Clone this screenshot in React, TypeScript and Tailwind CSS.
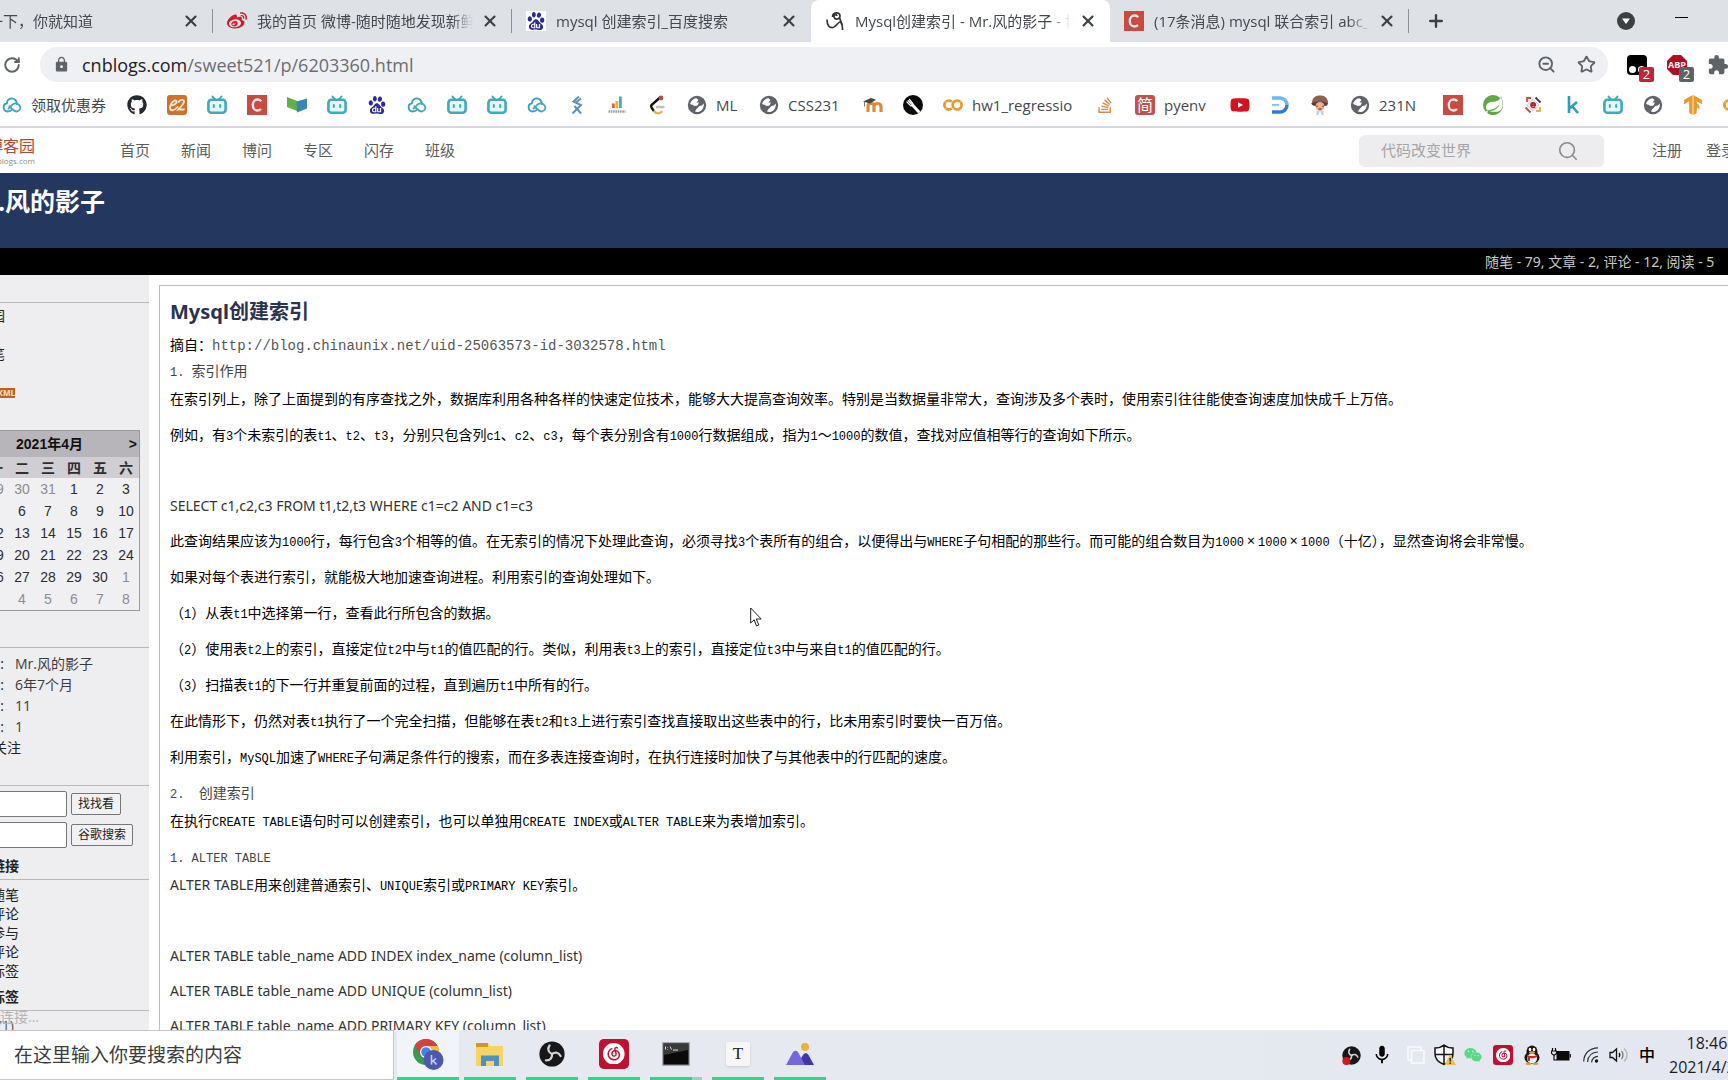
import React from "react";
import { FaGithub, FaWeibo, FaStackOverflow, FaYoutube, FaWeixin } from "react-icons/fa";
import { MdExtension, MdLock, MdMic } from "react-icons/md";
import {
  SiBaidu,
  SiGooglecolab,
  SiSpring,
  SiTensorflow,
  SiNeteasecloudmusic,
} from "react-icons/si";
import { X, Plus, Star, Search, ZoomOut, RotateCw } from "lucide-react";

/* ---------- icons ---------- */

const Bili = () => (
  <svg viewBox="0 0 20 20" className="size-5" fill="none" stroke="#3fa9bd" strokeWidth="2.6" strokeLinecap="round">
    <rect x="1.4" y="4.8" width="17.2" height="13" rx="3" fill="#e6f8fa" />
    <path d="M5.500 1.600 8 4.400M14.500 1.600 12 4.400" strokeWidth="2" />
    <path d="M6.800 10v2M13.200 10v2" strokeWidth="2" />
  </svg>
);

const Cloud = () => (
  <svg viewBox="0 0 20 20" className="size-5" fill="none" stroke="#3a9fc4" strokeWidth="1.9" strokeLinecap="round">
    <path d="M10 14.500C8.800 16 7.500 16.500 5.500 16.500A4.200 4.200 0 0 1 5 8.200M4.800 8.200C5.300 4 9 2.500 12 4c2 1 2.900 2.800 2.700 5" />
    <path d="M6.500 13.500 9.700 10.300c2.500-2.500 5.500-2.200 7.300-.5 2.600 2.600 1 6.500-2.200 6.700-2.200.1-3-1-4.800-2.600L7.500 11.300" stroke="#42adba" />
  </svg>
);

const Csdn = () => (
  <svg viewBox="0 0 20 20" className="size-5">
    <rect width="20" height="20" fill="#c94a42" />
    <path d="M14.200 6.200C13.200 5 11.900 4.500 10.500 4.500 7.500 4.500 5.800 7 5.800 10s1.700 5.500 4.500 5.500c1.500 0 2.700-.5 3.700-1.500" fill="none" stroke="#fbe9e7" strokeWidth="2.300" />
  </svg>
);

const Globe = () => (
  <svg viewBox="0 0 20 20" className="size-5">
    <circle cx="10" cy="10" r="9.200" fill="#606368" />
    <path d="M3 9C3.800 6 6 3.500 9.500 3.200L11.500 5 9.500 7.500h2.500l-1.500 3-3 .5-1.500-1Z" fill="#fff" />
    <path d="M10 13.500 12.500 11l2.500-.500 1.800-2c.5 3.500-1.300 7-4.800 8.200-1.500.5-3 .3-4-.2L9 14.500Z" fill="#fff" />
  </svg>
);

const Baidu = () => (
  <span className="flex size-5 items-center justify-center bg-white">
    <SiBaidu className="size-[18px] text-[#2b2a9c]" />
  </span>
);

const Ali = () => (
  <svg viewBox="0 0 20 20" className="size-5" fill="none" stroke="#fbe6d2" strokeWidth="1.900" strokeLinecap="round">
    <rect width="20" height="20" rx="3" fill="#d0702a" stroke="none" />
    <path d="M4 10.500c3.500-.5 6-2.300 5.500-4.300C9 4.500 5.500 6 3.800 9.500 2.300 13 3 15.500 5.500 15.300c2-.2 3.500-1.500 5-3.300" />
    <path d="M11.500 7c1-2.300 5-3 5.500-.8.400 2-1.500 3.600-5.500 8.300 2-.5 3.800.8 5.500-.3" />
  </svg>
);

const Map = () => (
  <svg viewBox="0 0 20 20" className="size-5">
    <path d="M0 2 10 6v10L0 12Z" fill="#62b146" />
    <path d="M9.500 6.500 20 3.500v10L10 17.500Z" fill="#3a86b8" />
  </svg>
);

const Knot = () => (
  <svg viewBox="0 0 20 20" className="size-5" fill="none" stroke="#5a8fc9" strokeWidth="2">
    <path d="M12 1.500 6.500 6.500l7.500 3.500-8.500 8.500M7.500 11l6.500 7.500M9.500 7 14 3.500" />
  </svg>
);

const CodeTop = () => (
  <svg viewBox="0 0 20 20" className="size-5">
    <rect x="5" y="8.500" width="2.800" height="4.500" fill="#e0683c" />
    <rect x="8.500" y="6" width="2.800" height="7" fill="#e2b53c" />
    <rect x="12" y="1.500" width="2.800" height="11.500" fill="#3bb6a9" />
    <path d="M1.500 16.500h17" stroke="#9a9da2" strokeWidth="2.500" strokeDasharray="1.600 .7" />
  </svg>
);

const Leet = () => (
  <svg viewBox="0 0 20 20" className="size-5" fill="none" strokeWidth="2.400" strokeLinecap="round">
    <path d="M13 2.500 4.500 10a2 2 0 0 0 0 2.500L6.500 15.500" stroke="#111" />
    <path d="M7.500 16.500c2 2.500 5 2.500 7 .200" stroke="#e5b352" />
    <path d="M10 12H16.500" stroke="#c4c0b8" />
    <circle cx="14" cy="3" r="1.200" stroke="#a8544a" />
  </svg>
);

const Moodle = () => (
  <svg viewBox="0 0 20 20" className="size-5" fill="none">
    <path d="M5 17V11c0-3.500 6-3.500 6 0V17M11 11.500c0-4 7-4 7 0V17" stroke="#e08a35" strokeWidth="3.200" />
    <path d="M0 6.500 8 3l5 1.700L7 8.500Z" fill="#444" />
    <path d="M1.500 6.500v5" stroke="#777" />
  </svg>
);

const Fork = () => (
  <svg viewBox="0 0 20 20" className="size-5">
    <circle cx="10" cy="10" r="10" fill="#0b0b0b" />
    <path d="M9.500 10 15.500 16.500" stroke="#fff" strokeWidth="3" strokeLinecap="round" />
    <path d="m4 7 3.500 3.600c1.200.7 3-1 2.200-2.200L6.500 4.500M5.200 5.700l3 3" stroke="#fff" strokeWidth="1.300" fill="none" strokeLinecap="round" />
  </svg>
);

const Jian = () => (
  <span className="flex size-5 items-center justify-center rounded-[3px] bg-[#c4504c] text-base leading-5 text-white">简</span>
);

const DLogo = () => (
  <svg viewBox="0 0 20 20" className="size-5" fill="none" strokeWidth="3.400">
    <path d="M2 3h8a7 7 0 0 1 7 7" stroke="#6fb7ee" />
    <path d="M17 10a7 7 0 0 1-7 7H2" stroke="#3579d6" />
    <path d="M2 10h7" stroke="#8cc7ef" strokeWidth="2.200" />
  </svg>
);

const Face = () => (
  <svg viewBox="0 0 20 20" className="size-5">
    <path d="M2 8C2 3 5 .5 10 .5S18 3 18 8l-2 3H4Z" fill="#8a6252" />
    <path d="M1 8.500c4-2.500 13-2.500 17 0l-1 2H3Z" fill="#5a3a30" />
    <circle cx="10" cy="11.500" r="4.500" fill="#e7b494" />
    <path d="M7 10.500v1.500M13 10.500v1.500M8.500 14h3" stroke="#a1372f" strokeWidth="1.400" />
    <path d="M6.500 16h7v4h-7Z" fill="#b7d5e8" />
    <path d="m10 15.500 1.500 4.500h-3Z" fill="#fff" />
  </svg>
);

const Eclip = () => (
  <svg viewBox="0 0 20 20" className="size-5" fill="none">
    <path d="M4 7V3h4" stroke="#d04a42" strokeWidth="1.800" />
    <path d="m12.500 2.500 5 5" stroke="#3c3c66" strokeWidth="2" />
    <path d="m2.500 12.500 5 5" stroke="#c64a45" strokeWidth="1.800" />
    <path d="M17 12v4h-4" stroke="#e5b23f" strokeWidth="1.800" />
    <path d="M10 3.800 16.200 10 10 16.200 3.800 10Z" fill="#f9e9e9" stroke="#d9c4c4" />
    <path d="M8 10.200h4.200c0-3.200-4.200-3.200-4.200 0 0 2.800 3 2.800 4.200 1.300" stroke="#a5222a" strokeWidth="1.700" />
  </svg>
);

const KLogo = () => (
  <svg viewBox="0 0 20 20" className="size-5" fill="none" stroke="#2d9cbf" strokeWidth="2.600">
    <path d="M6 1v17M14 7l-7 6M9 11l6 7" />
  </svg>
);

const NetEase = () => (
  <span className="flex size-full items-center justify-center rounded-[16%] bg-[#c1102f]">
    <SiNeteasecloudmusic className="size-[72%] text-white" />
  </span>
);

const ChromeIcon = () => (
  <svg viewBox="0 0 32 32" className="size-8">
    <circle cx="14" cy="14" r="13" fill="#3b9a50" />
    <path d="M2.700 7.500A13 13 0 0 1 25.300 7.500L14 9l-5.500 8Z" fill="#cf4340" />
    <path d="M25.300 7.500A13 13 0 0 1 14 27l5.500-10L14 8h11Z" fill="#eebf3a" />
    <circle cx="14" cy="14" r="6" fill="#fff" />
    <circle cx="14" cy="14" r="4.800" fill="#4286e0" />
    <circle cx="21.500" cy="22" r="10" fill="#4b58ad" />
    <path d="M19.500 17v9.500M24 20.500l-4 3.200M21.200 22.900l3.300 3.600" stroke="#c8cdf0" strokeWidth="1.600" fill="none" />
  </svg>
);

const FolderIcon = () => (
  <svg viewBox="0 0 30 26" className="h-[26px] w-[30px]">
    <path d="M1 2h12l2 3h13v20H1Z" fill="#f6d463" />
    <path d="M1 2h12v4H1Z" fill="#c99a2b" />
    <path d="M6 25V14.500h18V25h-5v-5h-8v5Z" fill="#4b93b8" />
  </svg>
);

const TerminalIcon = () => (
  <svg viewBox="0 0 28 24" className="h-6 w-7">
    <rect x=".7" y=".7" width="26.600" height="22.600" fill="#0a0a0a" stroke="#a9adb2" strokeWidth="1.400" />
    <path d="M2 2h24v6L2 13Z" fill="#3a3a3a" />
    <path d="M3.500 4.500v3M5.500 5v.5M5.500 7v.5M8 4.500l1.500 3M11 8h5" stroke="#ddd" fill="none" />
  </svg>
);

const TyporaIcon = () => (
  <span className="flex size-6 items-center justify-center rounded-[2px] bg-[#f6f6f6] font-['Liberation_Serif',serif] text-[17px] leading-6 text-[#222] shadow-sm">T</span>
);

const HillsIcon = () => (
  <svg viewBox="0 0 30 24" className="h-6 w-[30px]">
    <circle cx="20" cy="5" r="4" fill="#e8b23c" />
    <path d="M12 23 18 13c1.500-2.500 4-2.500 5.500 0L29 23Z" fill="#4334a8" />
    <path d="M1 23 7.500 11c1.500-3 4.500-3 6 0L20 23Z" fill="#7766dc" />
  </svg>
);

const ObsIcon = ({ dot = false }: { dot?: boolean }) => (
  <svg viewBox="0 0 26 26" className="size-full" fill="none">
    <circle cx="13" cy="13" r="12.600" fill="#17171a" />
    <g stroke="#d4d4d8" strokeWidth="2.200" strokeLinecap="round">
      <path id="blade" d="M13 13C9.500 11.500 8 8 10.500 4.500" />
      <path d="M13 13C9.500 11.500 8 8 10.500 4.500" transform="rotate(120 13 13)" />
      <path d="M13 13C9.500 11.500 8 8 10.500 4.500" transform="rotate(240 13 13)" />
    </g>
    {dot && <circle cx="6" cy="20.500" r="5.500" fill="#d3161b" />}
  </svg>
);

const CopyIcon = () => (
  <svg viewBox="0 0 18 18" className="size-[18px]" fill="none" stroke="#fafafc" strokeWidth="1.500">
    <path d="M4.500 4.500h12.500v12.500H4.500ZM4 14H1V1h13v3" />
  </svg>
);

const ShieldIcon = () => (
  <svg viewBox="0 0 22 22" className="size-[22px]" fill="none">
    <path d="M10 1C7.500 3 4.500 4 1 4v6c0 5 4 8.500 9 10.500C15 18.500 19 15 19 10V4c-3.500 0-6.500-1-9-3ZM10 1v19M1 10.500h18" stroke="#161616" strokeWidth="1.500" fill="#f8f8fa" />
    <path d="M16 10.500 22 21H10.500Z" fill="#ecc04e" />
    <path d="M16.200 14v3.500M16.200 18.500V20" stroke="#222" strokeWidth="1.400" />
  </svg>
);

const QqIcon = () => (
  <svg viewBox="0 0 18 20" className="h-5 w-[18px]">
    <ellipse cx="9" cy="6.500" rx="5.500" ry="6" fill="#161616" />
    <ellipse cx="9" cy="12.500" rx="7.500" ry="6.500" fill="#161616" />
    <ellipse cx="9" cy="13.500" rx="5" ry="5" fill="#f5f5f5" />
    <ellipse cx="7" cy="4.500" rx="1.300" ry="1.700" fill="#fff" />
    <ellipse cx="11" cy="4.500" rx="1.300" ry="1.700" fill="#fff" />
    <ellipse cx="9" cy="7.500" rx="3" ry="1.200" fill="#e9a23a" />
    <path d="M3.500 9.500c3 2 8 2 11 0v2c-3 2-5.500 2-7.500 1.500V16H4.500v-3.500Z" fill="#cf2127" />
    <ellipse cx="5.500" cy="18.800" rx="3" ry="1.200" fill="#e59a35" />
    <ellipse cx="12.500" cy="18.800" rx="3" ry="1.200" fill="#e59a35" />
  </svg>
);

const BatteryIcon = () => (
  <svg viewBox="0 0 20 14" className="h-[14px] w-5" fill="none" stroke="#0a0a0a">
    <rect x="6" y="3.500" width="12" height="8.500" fill="#0a0a0a" />
    <path d="M19.300 6v3.500M1.500 0v3M4.500 0v3M.5 3h5v2.500L3 7.500.5 5.500ZM3 7v5h3" strokeWidth="1.200" />
  </svg>
);

const WifiIcon = () => (
  <svg viewBox="0 0 16 16" className="size-4" fill="none" stroke="#333" strokeWidth="1.200">
    <path d="M.7 14.500C1 6 7 1 15 .8M4.500 15C5 9 9 5.300 15 5M8.500 15.300C9 12 11.500 9.500 15 9.300" />
    <circle cx="13.500" cy="14" r="1.700" fill="#111" stroke="none" />
  </svg>
);

const SoundIcon = () => (
  <svg viewBox="0 0 20 16" className="h-4 w-5" fill="none" stroke="#111" strokeWidth="1.300">
    <path d="M1 5.500h2.500L7.500 2v12l-4-3.500H1Z" />
    <path d="M10 6c.8 1 .8 3 0 4" />
    <path d="M12.500 4c2 2 2 6 0 8" stroke="#777" />
    <path d="M15 1.500c4 3.500 4 9.500 0 13" stroke="#b5b5b8" />
  </svg>
);

/* ---------- browser chrome ---------- */

type TabInfo = { icon?: React.ReactNode; title: string; active?: boolean; bar?: boolean };

const tabs: TabInfo[] = [
  { icon: <Baidu />, title: "百度一下，你就知道", bar: true },
  { icon: <FaWeibo className="size-5 text-[#c5202c]" />, title: "我的首页 微博-随时随地发现新鲜事", bar: true },
  { icon: <Baidu />, title: "mysql 创建索引_百度搜索" },
  {
    icon: (
      <svg viewBox="0 0 20 20" className="size-5" fill="none" stroke="#333" strokeWidth="1.700">
        <path d="M2 8.500c0 6 2.500 8.500 6 8 3.500-.5 4.500-5.500 7-5.500 1.500 0 2.500 3 2.500 8" />
        <path d="M7.500 6c0-5 7.500-5.500 7.500-1 0 4-6 4-6 .5 0-2 2.500-2.500 3-.5M14.500 6.500 17 14" />
      </svg>
    ),
    title: "Mysql创建索引 - Mr.风的影子 - 博客园",
    active: true,
  },
  { icon: <Csdn />, title: "(17条消息) mysql 联合索引 abc_", bar: true },
];

function TabStrip() {
  return (
    <div className="flex h-[42px] shrink-0 overflow-hidden bg-[#dee1e6]">
      <div className="-ml-[86px] flex shrink-0">
        {tabs.map((t, i) => (
          <div
            key={i}
            className={
              t.active
                ? "flex w-[299px] items-center rounded-t-lg bg-white pr-2 pl-3.5"
                : "flex w-[299px] items-center pr-2 pl-3.5"
            }
          >
            <span className="flex size-5 shrink-0 items-center justify-center">{t.icon}</span>
            <span className="ml-2.5 flex-1 overflow-hidden mask-r-from-90% text-[15px] whitespace-nowrap text-[#45484d]">
              {t.title}
            </span>
            <button aria-label="关闭标签页" className="ml-2 text-[#3c4043]">
              <X className="size-[18px]" strokeWidth={2.8} />
            </button>
            <span className={t.bar ? "-mr-2 ml-3 h-6 w-px bg-[#8d9095]" : "-mr-2 ml-3 h-6 w-px"} />
          </div>
        ))}
      </div>
      <button aria-label="新标签页" className="ml-[17px] text-[#3c4043]">
        <Plus className="size-5" strokeWidth={2.8} />
      </button>
      <div className="ml-auto flex items-center gap-10 pr-10">
        <span className="flex size-[18px] items-center justify-center rounded-full bg-[#3c4043]">
          <svg viewBox="0 0 10 10" className="size-2.5">
            <path d="M1 2.500h8L5 8Z" fill="#fff" />
          </svg>
        </span>
        <button aria-label="最小化" className="mb-2 h-px w-[13px] bg-black" />
      </div>
    </div>
  );
}

function AddressBar() {
  return (
    <div className="flex h-[45px] shrink-0 items-center bg-white pl-[3px]">
      <button aria-label="重新加载" className="text-[#5f6368]">
        <RotateCw className="size-[18px]" strokeWidth={2.6} />
      </button>
      <div className="ml-[19px] flex h-[35px] flex-1 items-center rounded-full bg-[#eff0f4] pr-3 pl-[13px]">
        <MdLock className="size-[17px] text-[#5f6368]" />
        <div className="ml-3 flex-1 text-lg leading-6 whitespace-nowrap text-[#6a6d72]">
          <span className="text-[#202124]">cnblogs.com</span>/sweet521/p/6203360.html
        </div>
        <ZoomOut className="size-[19px] text-[#5f6368]" strokeWidth={2.4} />
        <Star className="ml-[21px] size-[19px] text-[#5f6368]" strokeWidth={2.3} />
      </div>
      <div className="ml-[19px] flex w-[101px] items-center">
        <span className="relative h-5 w-5 shrink-0 rounded-[4px] bg-black">
          <span className="absolute bottom-0.5 left-0.5 size-[7px] rounded-full bg-white" />
          <span className="absolute right-0.5 bottom-0.5 size-[7px] rounded-full bg-white" />
          <span className="absolute top-3 left-3 flex h-[15px] w-[15px] items-center justify-center rounded-[2px] bg-[#c0253c] text-[13px] leading-none text-white">2</span>
        </span>
        <span className="relative ml-5 flex size-5 shrink-0 items-center justify-center">
          <svg viewBox="0 0 20 20" className="size-5">
            <path d="M6 0h8l6 6v8l-6 6H6l-6-6V6Z" fill="#b00d20" />
          </svg>
          <span className="absolute text-[9px] font-bold text-white">ABP</span>
          <span className="absolute top-3 left-3 flex h-[15px] w-[15px] items-center justify-center rounded-[2px] bg-[#5f6368] text-[13px] leading-none text-white">2</span>
        </span>
        <MdExtension className="ml-5 size-[22px] shrink-0 text-[#5f6368]" />
      </div>
    </div>
  );
}

const bookmarks: { icon: React.ReactNode; label?: string; size?: string }[] = [
  { icon: <Cloud />, label: "领取优惠券", size: "w-[105px]" },
  { icon: <FaGithub className="size-5 text-[#24292e]" /> },
  { icon: <Ali /> },
  { icon: <Bili /> },
  { icon: <Csdn /> },
  { icon: <Map /> },
  { icon: <Bili /> },
  { icon: <Baidu /> },
  { icon: <Cloud /> },
  { icon: <Bili /> },
  { icon: <Bili /> },
  { icon: <Cloud /> },
  { icon: <Knot /> },
  { icon: <CodeTop /> },
  { icon: <Leet /> },
  { icon: <Globe />, label: "ML", size: "w-[52px]" },
  { icon: <Globe />, label: "CSS231", size: "w-[84px]" },
  { icon: <Moodle /> },
  { icon: <Fork /> },
  { icon: <SiGooglecolab className="size-5 stroke-[#e59a2f] text-[#e59a2f]" />, label: "hw1_regressio", size: "w-[132px]" },
  { icon: <FaStackOverflow className="size-[18px] text-[#d68a4c]" /> },
  { icon: <Jian />, label: "pyenv", size: "w-[75px]" },
  { icon: <FaYoutube className="size-5 text-[#d5121e]" /> },
  { icon: <DLogo /> },
  { icon: <Face /> },
  { icon: <Globe />, label: "231N", size: "w-[73px]" },
  { icon: <Csdn /> },
  { icon: <SiSpring className="size-5 text-[#5fa845]" /> },
  { icon: <Eclip /> },
  { icon: <KLogo /> },
  { icon: <Bili /> },
  { icon: <Globe /> },
  { icon: <SiTensorflow className="size-5 text-[#e89a2c]" /> },
  { icon: <SiGooglecolab className="size-5 stroke-[#e59a2f] text-[#e59a2f]" /> },
];

function Bookmarks() {
  return (
    <nav className="flex h-[41px] shrink-0 items-center gap-5 overflow-hidden border-b-2 border-[#d6d7da] bg-white pb-[3px] pl-0.5">
      {bookmarks.map((b, i) => (
        <a
          key={i}
          href="#"
          className={`flex shrink-0 items-center gap-[9px] text-[15px] whitespace-nowrap text-[#45484d] ${b.size ?? "w-5"}`}
        >
          <span className="flex size-5 shrink-0 items-center justify-center">{b.icon}</span>
          {b.label}
        </a>
      ))}
    </nav>
  );
}

/* ---------- page ---------- */

function SiteHeader() {
  return (
    <header className="flex h-[45px] shrink-0 items-center overflow-hidden bg-white text-[15px] text-[#5c5c5c]">
      <a href="#" className="-ml-[45px] flex w-20 shrink-0 flex-col items-end">
        <span className="text-base leading-5 text-[#b04a35]">博客园</span>
        <span className="text-[8px] leading-[9px] text-[#8a8a8a]">cnblogs.com</span>
      </a>
      <nav className="ml-[85px] flex gap-[31px]">
        {["首页", "新闻", "博问", "专区", "闪存", "班级"].map((n) => (
          <a key={n} href="#">
            {n}
          </a>
        ))}
      </nav>
      <div className="ml-auto flex w-[369px] shrink-0 items-center whitespace-nowrap">
        <label className="flex h-8 w-[245px] shrink-0 items-center rounded-md bg-[#ededef] pr-[25px] pl-[22px]">
          <input
            aria-label="搜索"
            placeholder="代码改变世界"
            className="w-0 flex-1 outline-none placeholder:text-[#a5a5a8]"
          />
          <Search className="size-[22px] text-[#8c8c8f]" strokeWidth={1.8} />
        </label>
        <a href="#" className="ml-12">
          注册
        </a>
        <a href="#" className="ml-6">
          登录
        </a>
      </div>
    </header>
  );
}

const weeks = [
  [28, 29, 30, 31, 1, 2, 3],
  [4, 5, 6, 7, 8, 9, 10],
  [11, 12, 13, 14, 15, 16, 17],
  [18, 19, 20, 21, 22, 23, 24],
  [25, 26, 27, 28, 29, 30, 1],
  [2, 3, 4, 5, 6, 7, 8],
];

const isOutside = (row: number, day: number) => (row === 0 && day > 20) || (row >= 4 && day < 20);

function Calendar() {
  return (
    <div className="mr-[9px] ml-auto w-[184px] border border-[#9b999d] bg-[#f0eff2] font-['Liberation_Sans','Noto_Sans_CJK_SC',sans-serif] text-[#2e2e30]">
      <div className="flex h-[26px] items-center justify-between bg-[#b7b5b9] pr-0.5 pl-1 text-sm font-bold text-[#111]">
        <span>&lt;</span>
        <span className="ml-px">2021年4月</span>
        <span>&gt;</span>
      </div>
      <table className="w-full table-fixed text-center text-sm">
        <thead>
          <tr className="h-[21px] bg-[#d0ced2] leading-5">
            {["日", "一", "二", "三", "四", "五", "六"].map((d) => (
              <th key={d}>{d}</th>
            ))}
          </tr>
        </thead>
        <tbody>
          {weeks.map((w, r) => (
            <tr key={r} className="h-[22px] leading-5">
              {w.map((d, c) => (
                <td key={c} className={isOutside(r, d) ? "text-[#8d8c90]" : ""}>
                  {d}
                </td>
              ))}
            </tr>
          ))}
        </tbody>
      </table>
    </div>
  );
}

function Sidebar() {
  const profile = [
    ["昵称:", "Mr.风的影子"],
    ["园龄:", "6年7个月"],
    ["粉丝:", "11"],
    ["关注:", "1"],
  ];
  return (
    <aside className="flex w-[149px] shrink-0 justify-end overflow-hidden bg-[#eeedf0] text-sm text-[#222]">
      <div className="w-[249px] shrink-0">
        <div className="h-[28px] border-b border-[#b9b8bb]" />
        <div className="flex h-[127px] flex-col items-start pt-0.5">
          <a href="#" className="w-[105px] text-right leading-[22px]">博客园</a>
          <a href="#" className="mt-4 w-[105px] text-right leading-[22px]">新随笔</a>
          <a href="#" className="mt-[23px] ml-[89px] flex h-[10px] w-[26px] items-center justify-end bg-[#b9622a] text-[8px] font-bold text-[#fbe3cc]">XML</a>
        </div>
        <Calendar />
        <div className="h-[37px] border-b border-[#b9b8bb]" />
        <dl className="pt-[5px]">
          {profile.map(([k, v]) => (
            <div key={k} className="flex h-[21px] leading-[21px]">
              <dt className="w-[104px] text-right font-medium">{k}</dt>
              <dd className="ml-[11px] text-[#3b3b3d]">{v}</dd>
            </div>
          ))}
        </dl>
        <a href="#" className="block w-[121px] text-right leading-[21px]">+加关注</a>
        <div className="h-7 border-b border-[#b9b8bb]" />
        <form className="flex flex-col gap-[5px] pt-[5px] text-xs" onSubmit={(e) => e.preventDefault()}>
          <div className="flex items-center">
            <input aria-label="找找看" className="h-[26px] w-[167px] rounded-[2px] border border-[#767676] bg-white" />
            <button className="ml-1 h-[22px] rounded-[2px] border border-[#767676] bg-[#f1f0f2] px-1.5">找找看</button>
          </div>
          <div className="flex items-center">
            <input aria-label="谷歌搜索" className="h-[26px] w-[167px] rounded-[2px] border border-[#767676] bg-white" />
            <button className="ml-1 h-[22px] rounded-[2px] border border-[#767676] bg-[#f1f0f2] px-1.5">谷歌搜索</button>
          </div>
        </form>
        <h3 className="h-[32px] border-b border-[#b9b8bb] pt-2 text-sm font-bold">
          <span className="block w-[119px] text-right">常用链接</span>
        </h3>
        <ul className="w-[119px] pt-[5px] text-right leading-[19px]">
          {["我的随笔", "我的评论", "我的参与", "最新评论", "我的标签"].map((l) => (
            <li key={l}>
              <a href="#">{l}</a>
            </li>
          ))}
        </ul>
        <h3 className="h-[31px] border-b border-[#b9b8bb] pt-[7px] text-sm font-bold">
          <span className="block w-[119px] text-right">我的标签</span>
        </h3>
        <a href="#" className="mt-[5px] block w-[114px] text-right text-[#555]">索引(1)</a>
      </div>
    </aside>
  );
}

/* Chinese text at 14px with monospaced Latin runs set at half its advance. */
function Mixed({ text }: { text: string }) {
  return (
    <>
      {text.split(/([\x20-\x7e]+|×)/).map((part, i) => {
        if (part === "×") {
          return (
            <span key={i} className="inline-block w-3.5 text-center">
              ×
            </span>
          );
        }
        return i % 2 ? (
          <span key={i} className="font-['Liberation_Mono',monospace] text-[12px]">
            {part}
          </span>
        ) : (
          part
        );
      })}
    </>
  );
}

const P = ({ children }: { children: string }) => (
  <p className="mb-[15px] h-[21px] leading-[21px] whitespace-pre text-black">
    <Mixed text={children} />
  </p>
);
const H = ({ children }: { children: string }) => (
  <h2 className="mb-1.5 h-[22px] leading-[22px] whitespace-pre text-[#444]">
    <Mixed text={children} />
  </h2>
);
const Sql = ({ children }: { children?: string }) => (
  <p className="mb-3.5 h-[21px] leading-[21px] whitespace-pre text-[#333]">{children}</p>
);

function Article() {
  return (
    <main className="relative mt-[10px] ml-2.5 flex-1 overflow-hidden border-t border-l border-[#bfbfc2] bg-white pl-2.5 font-['Noto_Sans','Noto_Sans_CJK_SC',sans-serif] text-sm">
      <h1 className="mt-3 mb-2 text-xl leading-7 font-bold text-[#2b3252]">Mysql创建索引</h1>
      <p className="mb-[5px] h-[21px] leading-[21px] whitespace-pre text-black">
        摘自：
        <a href="#" className="font-['Liberation_Mono',monospace] text-[#555]">
          http://blog.chinaunix.net/uid-25063573-id-3032578.html
        </a>
      </p>
      <H>1. 索引作用</H>
      <P>在索引列上，除了上面提到的有序查找之外，数据库利用各种各样的快速定位技术，能够大大提高查询效率。特别是当数据量非常大，查询涉及多个表时，使用索引往往能使查询速度加快成千上万倍。</P>
      <P>例如，有3个未索引的表t1、t2、t3，分别只包含列c1、c2、c3，每个表分别含有1000行数据组成，指为1～1000的数值，查找对应值相等行的查询如下所示。</P>
      <Sql />
      <Sql>SELECT c1,c2,c3 FROM t1,t2,t3 WHERE c1=c2 AND c1=c3</Sql>
      <P>此查询结果应该为1000行，每行包含3个相等的值。在无索引的情况下处理此查询，必须寻找3个表所有的组合，以便得出与WHERE子句相配的那些行。而可能的组合数目为1000×1000×1000（十亿），显然查询将会非常慢。</P>
      <P>如果对每个表进行索引，就能极大地加速查询进程。利用索引的查询处理如下。</P>
      <P>（1）从表t1中选择第一行，查看此行所包含的数据。</P>
      <P>（2）使用表t2上的索引，直接定位t2中与t1的值匹配的行。类似，利用表t3上的索引，直接定位t3中与来自t1的值匹配的行。</P>
      <P>（3）扫描表t1的下一行并重复前面的过程，直到遍历t1中所有的行。</P>
      <P>在此情形下，仍然对表t1执行了一个完全扫描，但能够在表t2和t3上进行索引查找直接取出这些表中的行，比未用索引时要快一百万倍。</P>
      <P>利用索引，MySQL加速了WHERE子句满足条件行的搜索，而在多表连接查询时，在执行连接时加快了与其他表中的行匹配的速度。</P>
      <H>2.  创建索引</H>
      <P>在执行CREATE TABLE语句时可以创建索引，也可以单独用CREATE INDEX或ALTER TABLE来为表增加索引。</P>
      <H>1. ALTER TABLE</H>
      <p className="mb-[15px] h-[21px] leading-[21px] whitespace-pre text-black">
        <span className="text-[#333]">ALTER TABLE</span>
        <Mixed text="用来创建普通索引、UNIQUE索引或PRIMARY KEY索引。" />
      </p>
      <Sql />
      <Sql>ALTER TABLE table_name ADD INDEX index_name (column_list)</Sql>
      <Sql>ALTER TABLE table_name ADD UNIQUE (column_list)</Sql>
      <Sql>ALTER TABLE table_name ADD PRIMARY KEY (column_list)</Sql>
      <svg viewBox="0 0 12 20" className="absolute top-[321px] left-[590px] h-5 w-3">
        <path d="M.7 1v15l3.500-3.200L6.500 19l2.300-1-2.500-6h4.900Z" fill="#fff" stroke="#222" />
      </svg>
    </main>
  );
}

/* ---------- taskbar ---------- */

const apps = [
  { name: "Chrome", icon: <ChromeIcon /> },
  { name: "文件资源管理器", icon: <FolderIcon /> },
  { name: "OBS", icon: <span className="size-[26px]"><ObsIcon /></span> },
  { name: "网易云音乐", icon: <span className="size-[30px]"><NetEase /></span> },
  { name: "命令提示符", icon: <TerminalIcon /> },
  { name: "Typora", icon: <TyporaIcon /> },
  { name: "图片", icon: <HillsIcon /> },
];

function Taskbar() {
  return (
    <footer className="flex h-[50px] shrink-0 overflow-hidden bg-linear-to-r from-[#e6eaf0] via-[#e6eaf0] via-50% to-[#e4e7f0]">
      <input
        aria-label="搜索"
        placeholder="在这里输入你要搜索的内容"
        className="w-[394px] shrink-0 border-y border-r border-[#c4c6ca] bg-white pl-3.5 text-[19px] outline-none placeholder:text-[#3c3c3c]"
      />
      <div className="ml-[3px] flex shrink-0">
        {apps.map((a, i) => (
          <button
            key={a.name}
            aria-label={a.name}
            className={i === 0 ? "flex w-[62px] flex-col items-center bg-[#f1f4f9]" : "flex w-[62px] flex-col items-center px-[5px]"}
          >
            <span className="flex h-[47px] items-center justify-center">{a.icon}</span>
            <span className={i === 4 ? "h-[3px] w-full border-r-10 border-[#86dfb6] bg-[#38d188]" : "h-[3px] w-full bg-[#38d188]"} />
          </button>
        ))}
      </div>
      <div className="ml-auto flex w-[388px] shrink-0 items-center">
        <span className="mx-0.5 size-[19px] shrink-0"><ObsIcon dot /></span>
        <MdMic className="ml-2 size-[22px] shrink-0 text-black" />
        <span className="ml-3.5 shrink-0"><CopyIcon /></span>
        <span className="ml-[9px] shrink-0"><ShieldIcon /></span>
        <FaWeixin className="ml-2 size-[18px] shrink-0 text-[#58d98a]" />
        <span className="ml-[11px] size-5 shrink-0"><NetEase /></span>
        <span className="ml-2.5 shrink-0"><QqIcon /></span>
        <span className="ml-2.5 shrink-0"><BatteryIcon /></span>
        <span className="ml-3 shrink-0"><WifiIcon /></span>
        <span className="ml-2.5 shrink-0"><SoundIcon /></span>
        <span className="ml-2.5 shrink-0 text-base font-medium text-black">中</span>
        <div className="ml-3.5 shrink-0 text-center text-base leading-6 whitespace-nowrap text-[#1c1c1e]">
          <div>18:46</div>
          <div>2021/4/22</div>
        </div>
      </div>
    </footer>
  );
}

export default function App() {
  return (
    <div className="flex h-screen flex-col overflow-hidden bg-white font-['Open_Sans','Noto_Sans_CJK_SC',sans-serif]">
      <TabStrip />
      <AddressBar />
      <Bookmarks />
      <SiteHeader />
      <div className="h-[75px] shrink-0 overflow-hidden bg-[#24375f] pt-2.5">
        <div className="-ml-[37px] text-[25px] leading-9 font-bold whitespace-nowrap text-white">Mr.风的影子</div>
      </div>
      <div className="flex h-[27px] shrink-0 items-center justify-end overflow-hidden bg-black">
        <span className="w-[243px] font-['Noto_Sans','Noto_Sans_CJK_SC',sans-serif] text-sm whitespace-nowrap text-[#c9c9c9]">随笔 - 79, 文章 - 2, 评论 - 12, 阅读 - 5</span>
      </div>
      <div className="relative flex min-h-0 flex-1 overflow-hidden">
        <Sidebar />
        <Article />
        <div className="absolute bottom-[3px] left-0 flex h-5 w-[148px] overflow-hidden text-sm whitespace-nowrap text-[#b5b4b8]">
          <span>连接...</span>
        </div>
      </div>
      <Taskbar />
    </div>
  );
}
